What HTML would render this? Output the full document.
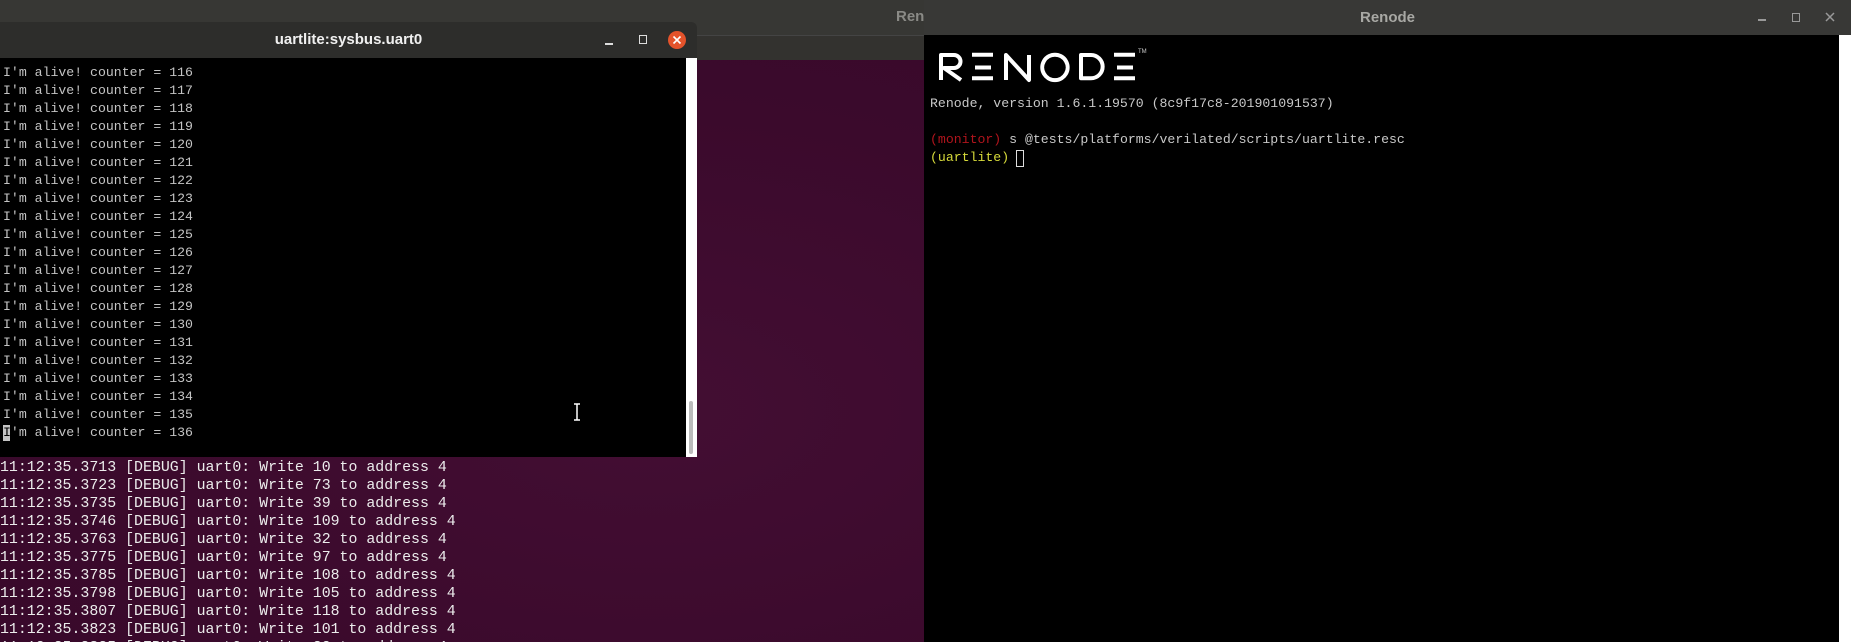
<!DOCTYPE html>
<html><head><meta charset="utf-8"><style>
html,body{margin:0;padding:0;width:1851px;height:642px;overflow:hidden;background:#3c0a2d;position:relative;font-family:"Liberation Mono",monospace}
.abs{position:absolute}
.line{position:absolute;left:3px;white-space:pre;font-size:13.2px;line-height:18px;color:#c4c4c4}
.dbg{position:absolute;left:0;white-space:pre;font-size:14.9px;line-height:18px;color:#ececec}
</style></head><body>
<div class="abs" style="left:0;top:0;width:924px;height:35px;background:#373734"></div>
<div class="abs" style="left:0;top:35px;width:924px;height:25px;background:#33322f;border-top:1px solid #444"></div>
<div class="abs" style="left:896px;top:8px;font:bold 15px 'Liberation Sans',sans-serif;color:#8a8a86">Ren</div>
<div class="abs" style="left:0;top:60px;width:924px;height:582px;background:radial-gradient(ellipse at 70% 60%,#430e33 0%,#3b0a2c 60%,#37082a 100%)"></div>
<div class="dbg" style="top:459px">11:12:35.3713 [DEBUG] uart0: Write 10 to address 4</div>
<div class="dbg" style="top:477px">11:12:35.3723 [DEBUG] uart0: Write 73 to address 4</div>
<div class="dbg" style="top:495px">11:12:35.3735 [DEBUG] uart0: Write 39 to address 4</div>
<div class="dbg" style="top:513px">11:12:35.3746 [DEBUG] uart0: Write 109 to address 4</div>
<div class="dbg" style="top:531px">11:12:35.3763 [DEBUG] uart0: Write 32 to address 4</div>
<div class="dbg" style="top:549px">11:12:35.3775 [DEBUG] uart0: Write 97 to address 4</div>
<div class="dbg" style="top:567px">11:12:35.3785 [DEBUG] uart0: Write 108 to address 4</div>
<div class="dbg" style="top:585px">11:12:35.3798 [DEBUG] uart0: Write 105 to address 4</div>
<div class="dbg" style="top:603px">11:12:35.3807 [DEBUG] uart0: Write 118 to address 4</div>
<div class="dbg" style="top:621px">11:12:35.3823 [DEBUG] uart0: Write 101 to address 4</div>
<div class="dbg" style="top:639px">11:12:35.3835 [DEBUG] uart0: Write 32 to address 4</div>

<div class="abs" style="left:0;top:22px;width:697px;height:36px;background:#2d2d2b;border-radius:0 6px 0 0"></div>
<div class="abs" style="left:0;top:22px;width:697px;height:36px;text-align:center;font:bold 15px/36px 'Liberation Sans',sans-serif;color:#f0f0f0">uartlite:sysbus.uart0</div>
<div class="abs" style="left:605px;top:43px;width:8px;height:1.5px;background:#ddd"></div>
<div class="abs" style="left:639px;top:35px;width:6px;height:7px;border:1.5px solid #ddd"></div>
<div class="abs" style="left:668px;top:31px;width:18px;height:18px;border-radius:50%;background:#e4532b"></div>
<svg class="abs" style="left:668px;top:31px" width="18" height="18"><path d="M5.5 5.5L12.5 12.5M12.5 5.5L5.5 12.5" stroke="#fff" stroke-width="1.6"/></svg>
<div class="abs" style="left:0;top:58px;width:686px;height:399px;background:#000"></div>
<div class="abs" style="left:686px;top:58px;width:11px;height:399px;background:#fff"></div>
<div class="abs" style="left:689px;top:401px;width:4px;height:53px;background:#bcbcbc;border-radius:2px"></div>
<div id="u"></div>
<script>
var h='';for(var i=0;i<21;i++){h+='<div class="line" style="top:'+(64+i*18)+'px">I\'m alive! counter = '+(116+i)+'</div>';}
document.getElementById('u').outerHTML=h;
</script>
<div class="abs" style="left:3px;top:425px;width:7px;height:16px;background:#c4c4c4"></div>
<div class="line" style="top:424px;color:#000">I</div>
<svg class="abs" style="left:572px;top:403px" width="10" height="18"><path d="M2 1H8M5 1V17M2 17H8" stroke="#fff" stroke-width="1.5"/></svg>

<div class="abs" style="left:924px;top:0;width:927px;height:35px;background:#383836"></div>
<div class="abs" style="left:924px;top:0;width:927px;height:35px;text-align:center;font:bold 15px/35px 'Liberation Sans',sans-serif;color:#a8a8a4">Renode</div>
<div class="abs" style="left:1758px;top:19px;width:8px;height:1.5px;background:#999"></div>
<div class="abs" style="left:1792px;top:13px;width:6px;height:7px;border:1.5px solid #999"></div>
<svg class="abs" style="left:1824px;top:11px" width="12" height="12"><path d="M2 2L10 10M10 2L2 10" stroke="#999" stroke-width="1.5"/></svg>
<div class="abs" style="left:924px;top:35px;width:915px;height:607px;background:#000"></div>
<div class="abs" style="left:1839px;top:35px;width:12px;height:607px;background:#fff"></div>
<svg class="abs" style="left:930px;top:45px" width="220" height="40" fill="none" stroke="#fff" stroke-width="4" stroke-linejoin="round" stroke-linecap="butt">
<path d="M11 35V10H24A6.5 6.5 0 0 1 24 23H14L31 35"/>
<path d="M42 9.7H63M45 22.5H61M42 33.3H63"/>
<path d="M76 35V10L99 35V10"/>
<path d="M125 9.7A12.7 12.7 0 1 1 124.9 9.7Z"/>
<path d="M151 10H161A11.5 11.5 0 0 1 161 33.3H151Z"/>
<path d="M184 9.7H205M187 22.5H203M184 33.3H205"/>
<text x="208" y="8" fill="#ccc" stroke="none" font-size="6" font-family="Liberation Sans">TM</text>
</svg>
<div class="line" style="left:930px;top:95px;color:#c8c8c8">Renode, version 1.6.1.19570 (8c9f17c8-201901091537)</div>
<div class="line" style="left:930px;top:131px;color:#c8c8c8"><span style="color:#b0141c">(monitor)</span> s @tests/platforms/verilated/scripts/uartlite.resc</div>
<div class="line" style="left:930px;top:149px;color:#d6da3a">(uartlite)</div>
<div class="abs" style="left:1016px;top:150px;width:6px;height:15px;border:1.5px solid #ddd"></div>
</body></html>
